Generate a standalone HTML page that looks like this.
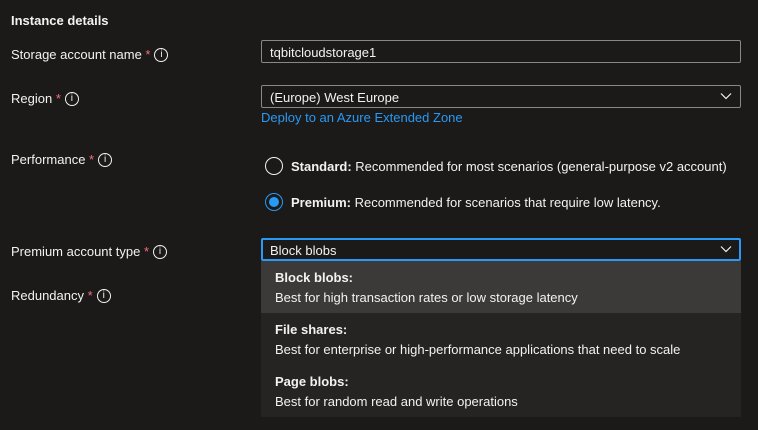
<!DOCTYPE html>
<html><head><style>
*{margin:0;padding:0;box-sizing:border-box}
body{width:758px;height:430px;background:#1b1a19;color:#f3f2f1;font-family:"Liberation Sans",sans-serif;font-size:13px;position:relative;overflow:hidden}
.a{position:absolute;white-space:nowrap}
.req{color:#f1707b}
.i{display:inline-block;width:14px;height:14px;border:1px solid #f3f2f1;border-radius:50%;font-size:10px;line-height:12px;text-align:center;vertical-align:middle;position:relative;top:-1px;margin-left:4px}
.box{position:absolute;left:261px;width:480px;height:23px;border:1px solid #8a8886;border-radius:2px;padding:4px 8px;background:#1b1a19}
.chev{position:absolute;right:8px;top:6px}
.radio{position:absolute;width:18px;height:18px;border-radius:50%;border:1px solid #f3f2f1}
b{font-weight:bold}
</style></head><body>
<div class="a" style="left:11px;top:13px;font-weight:bold;font-size:13px">Instance details</div>
<div class="a" style="left:11px;top:47px">Storage account name <span class="req">*</span><span class="i">i</span></div>
<div class="box" style="top:40px">tqbitcloudstorage1</div>
<div class="a" style="left:11px;top:91px">Region <span class="req">*</span><span class="i">i</span></div>
<div class="box" style="top:85px">(Europe) West Europe<svg class="chev" width="12" height="8" viewBox="0 0 12 8"><path d="M1 1.5 6 6.5 11 1.5" stroke="#f3f2f1" fill="none" stroke-width="1.2"/></svg></div>
<div class="a" style="left:261px;top:110px;color:#2899f5">Deploy to an Azure Extended Zone</div>
<div class="a" style="left:11px;top:152px">Performance <span class="req">*</span><span class="i">i</span></div>
<div class="radio" style="left:265px;top:157px"></div>
<div class="a" style="left:291px;top:159px"><b>Standard:</b> Recommended for most scenarios (general-purpose v2 account)</div>
<div class="radio" style="left:265px;top:193px;border-color:#2899f5"><div style="position:absolute;left:3px;top:3px;width:10px;height:10px;border-radius:50%;background:#2899f5"></div></div>
<div class="a" style="left:291px;top:195px"><b>Premium:</b> Recommended for scenarios that require low latency.</div>
<div class="a" style="left:11px;top:244px">Premium account type <span class="req">*</span><span class="i">i</span></div>
<div class="box" style="top:238px;border:2px solid #2899f5;padding:3px 7px">Block blobs<svg class="chev" style="right:7px;top:5px" width="12" height="8" viewBox="0 0 12 8"><path d="M1 1.5 6 6.5 11 1.5" stroke="#f3f2f1" fill="none" stroke-width="1.2"/></svg></div>
<div class="a" style="left:11px;top:288px">Redundancy <span class="req">*</span><span class="i">i</span></div>
<div class="a" style="left:261px;top:261px;width:480px;height:156px;background:#252423">
<div style="height:52px;background:#3b3a39;padding:7px 14px;line-height:20px"><b>Block blobs:</b><br>Best for high transaction rates or low storage latency</div>
<div style="height:52px;padding:7px 14px;line-height:20px"><b>File shares:</b><br>Best for enterprise or high-performance applications that need to scale</div>
<div style="height:52px;padding:7px 14px;line-height:20px"><b>Page blobs:</b><br>Best for random read and write operations</div>
</div>
</body></html>
